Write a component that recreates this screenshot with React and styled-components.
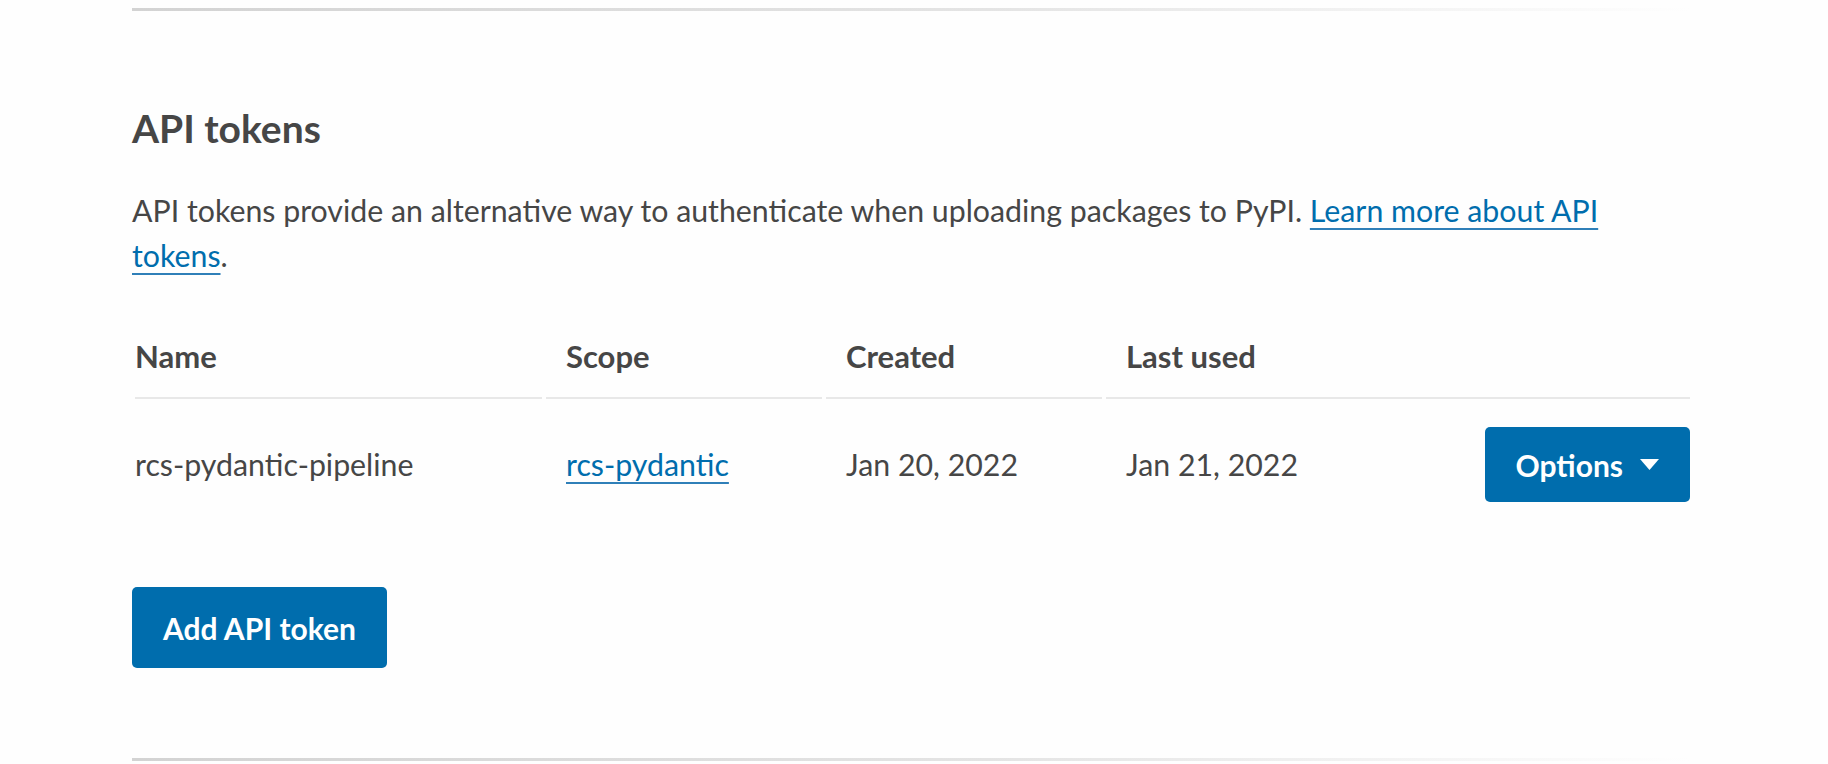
import React from 'react'
import styled, { createGlobalStyle } from 'styled-components'

const Colors = {
  text: '#464646',
  blue: '#006dad',
  underline: '#2f7fb8',
  border: '#e8e8e8',
  rule: '#d3d3d3',
  white: '#ffffff',
  page: '#fefefe',
}

const GlobalStyle = createGlobalStyle`
  html, body {
    margin: 0;
    padding: 0;
    background: ${Colors.page};
  }
  body {
    font-family: Lato, 'Noto Sans', sans-serif;
    font-size: 30.3px;
    line-height: 45px;
    color: ${Colors.text};
  }
`

const Page = styled.main`
  padding: 8px 138px 0 132px;
`

const SectionRule = styled.div`
  height: 3px;
  background-image: linear-gradient(to right, ${Colors.rule} 0%, #e4e4e4 55%, rgba(235, 235, 235, 0) 100%);
`

const Section = styled.section`
  padding: 93px 0 90px;
`

const Heading = styled.h2`
  margin: 0;
  font-size: 39px;
  line-height: 48px;
  font-weight: 700;
`

const Intro = styled.p`
  margin: 36px 0 0;
  max-width: 1510px;
`

const Link = styled.a`
  color: ${Colors.blue};
  text-decoration: underline;
  text-decoration-thickness: 2px;
  text-underline-offset: 6px;
  text-decoration-color: ${Colors.underline};
`

const TokenTable = styled.table`
  margin: 56px 0 0 -1px;
  width: 1563px;
  table-layout: fixed;
  border-collapse: separate;
  border-spacing: 4px 0;
`

const HeadCell = styled.th`
  padding: 0 20px 18px;
  text-align: left;
  font-size: 31px;
  font-weight: 700;
  border-bottom: 2px solid ${Colors.border};
  &:first-child {
    padding-left: 0;
  }
`

const Cell = styled.td`
  padding: 28px 20px;
  vertical-align: middle;
  white-space: nowrap;
  &:first-child {
    padding-left: 0;
  }
`

const ActionCell = styled(Cell)`
  padding-left: 0;
  padding-right: 0;
  text-align: right;
`

const Button = styled.button`
  display: inline-flex;
  align-items: center;
  gap: 17px;
  height: ${props => props.tall ? '81px' : '75px'};
  padding: 0 31px;
  border: 0;
  border-radius: 5px;
  background: ${Colors.blue};
  color: ${Colors.white};
  font-family: inherit;
  font-size: 30px;
  font-weight: 700;
  cursor: pointer;
`

const Actions = styled.div`
  margin-top: 57px;
`

const Caret = () => (
  <svg width="19" height="11" viewBox="0 0 19 11" aria-hidden="true">
    <path d="M0 0h19L9.5 11z" fill="currentColor" />
  </svg>
)

const tokens = [
  { name: 'rcs-pydantic-pipeline', scope: 'rcs-pydantic', created: 'Jan 20, 2022', lastUsed: 'Jan 21, 2022' },
]

export default function App() {
  return (
    <>
      <GlobalStyle />
      <Page>
        <SectionRule />
        <Section>
          <Heading>API tokens</Heading>
          <Intro>
            API tokens provide an alternative way to authenticate when uploading packages to PyPI.{' '}
            <Link href="#">Learn more about API tokens</Link>.
          </Intro>
          <TokenTable>
            <colgroup>
              <col style={{ width: 407 }} />
              <col style={{ width: 276 }} />
              <col style={{ width: 276 }} />
              <col style={{ width: 372 }} />
              <col style={{ width: 208 }} />
            </colgroup>
            <thead>
              <tr>
                <HeadCell>Name</HeadCell>
                <HeadCell>Scope</HeadCell>
                <HeadCell>Created</HeadCell>
                <HeadCell colSpan={2}>Last used</HeadCell>
              </tr>
            </thead>
            <tbody>
              {tokens.map(t => (
                <tr key={t.name}>
                  <Cell>{t.name}</Cell>
                  <Cell><Link href="#">{t.scope}</Link></Cell>
                  <Cell>{t.created}</Cell>
                  <Cell>{t.lastUsed}</Cell>
                  <ActionCell>
                    <Button>Options <Caret /></Button>
                  </ActionCell>
                </tr>
              ))}
            </tbody>
          </TokenTable>
          <Actions>
            <Button tall>Add API token</Button>
          </Actions>
        </Section>
        <SectionRule />
      </Page>
    </>
  )
}
